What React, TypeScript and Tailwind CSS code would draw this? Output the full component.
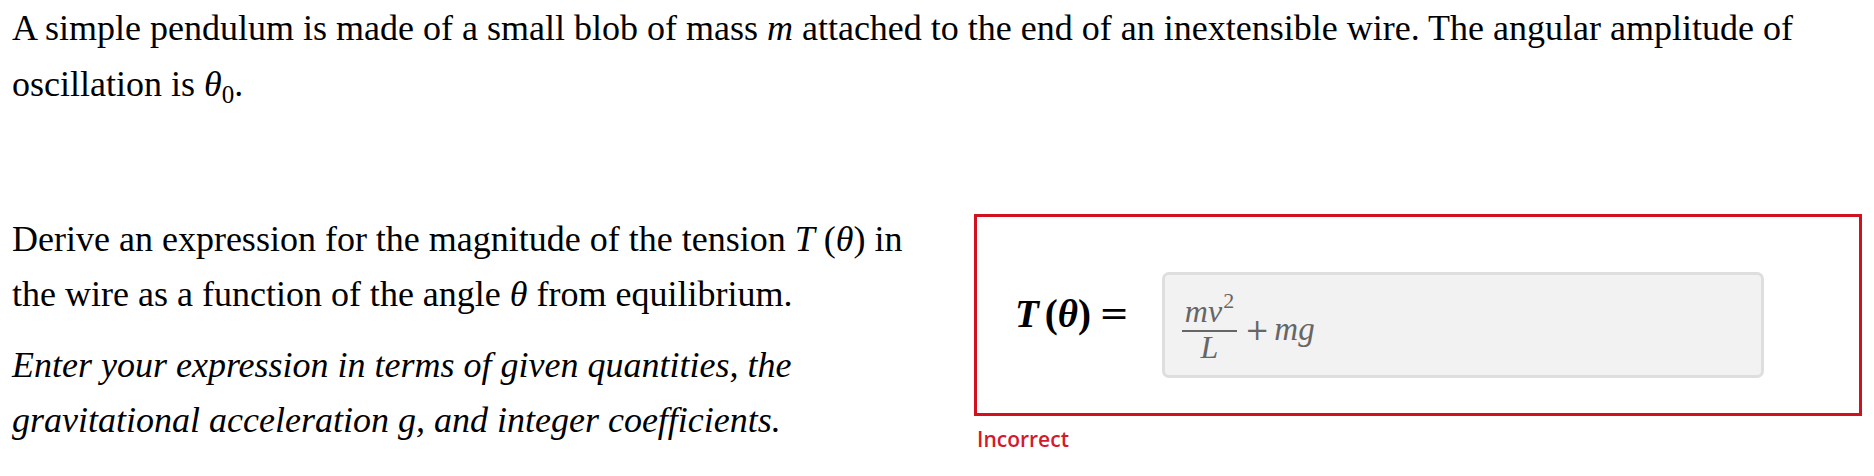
import React from "react";

const serif = { fontFamily: '"Liberation Serif", "Times New Roman", serif' };
const op = { fontFamily: '"DejaVu Serif", "Liberation Serif", serif' };

export default function App() {
  return (
    <div className="bg-white w-[1874px] h-[476px] overflow-hidden px-3 text-black text-[36px] leading-[56px]" style={serif}>
      <p>
        A simple pendulum is made of a small blob of mass <i>m</i> attached to the end of an inextensible wire. The angular amplitude of oscillation is <i>θ</i>
        <span className="text-[25px] leading-none relative top-[7px]">0</span>.
      </p>
      <div className="mt-[100px] flex">
        <div className="w-[930px] shrink-0 leading-[55px]">
          <p>
            Derive an expression for the magnitude of the tension <i>T</i>&nbsp;(<i>θ</i>) in the wire as a function of the angle <i>θ</i> from equilibrium.
          </p>
          <p className="italic mt-[16px]">
            Enter your expression in terms of given quantities, the gravitational acceleration g, and integer coefficients.
          </p>
        </div>
        <div className="ml-[32px] flex-1 mt-[2px]">
          <div className="h-[202px] border-[3px] border-[#d0121f] flex items-start pl-[38px] pt-[55px]">
            <div className="flex items-center h-[106px] pb-[24px] text-[39px] leading-none whitespace-nowrap w-[147px] font-bold">
              <i>T</i>
              <span className="ml-[6px]">(</span>
              <i>θ</i>
              <span>)</span>
              <span className="ml-[8px] font-normal text-[36px]" style={op}>=</span>
            </div>
            <div className="w-[602px] h-[106px] rounded-[7px] border-[3px] border-[#dedede] bg-[#f2f2f2] flex items-center pl-[17px] text-[#666666]">
              <div className="inline-flex flex-col items-center text-[32px] leading-none italic mt-[8px]">
                <span className="px-[1px] pb-[3px] whitespace-nowrap">
                  mv<span className="not-italic text-[22px] relative top-[-14px] ml-[1px]">2</span>
                </span>
                <span className="block h-[1.5px] w-[55px] bg-[#666666]"></span>
                <span className="-mt-[1px]">L</span>
              </div>
              <span className="text-[29px] ml-[8px] mt-[10px]" style={op}>+</span>
              <i className="text-[33px] ml-[5px] mt-[8px]">mg</i>
            </div>
          </div>
          <div className="mt-[13px] ml-[3px] text-[21px] leading-none font-semibold text-[#d31a2d]" style={{ fontFamily: '"Open Sans", sans-serif' }}>
            Incorrect
          </div>
        </div>
      </div>
    </div>
  );
}
